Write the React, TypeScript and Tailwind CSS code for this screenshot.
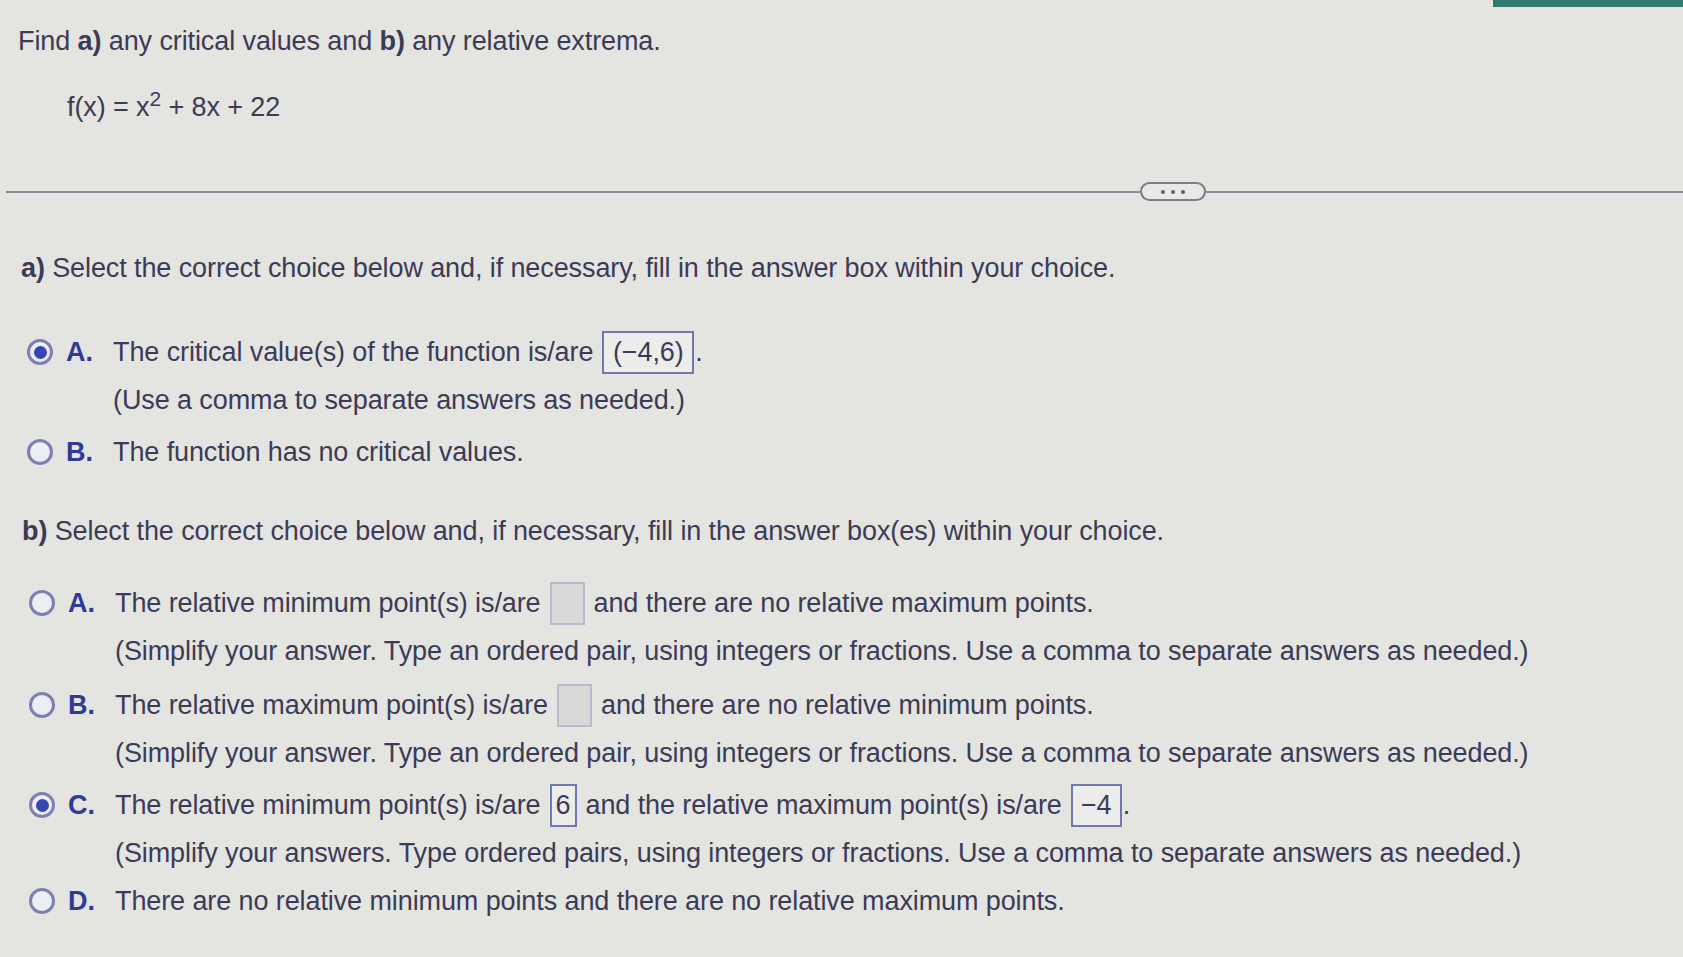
import React from 'react';

const font = { fontFamily: '"Liberation Sans", Arial, sans-serif' };

function Radio({ checked }: { checked?: boolean }) {
  return (
    <span className="flex h-[26px] w-[26px] shrink-0 items-center justify-center rounded-full border-[3px] border-[#7e80b4] bg-[#eceef4]">
      {checked && <span className="h-[13px] w-[13px] rounded-full bg-[#3447b5]" />}
    </span>
  );
}

function AnswerBox({ value, width }: { value?: string; width: string }) {
  if (!value) {
    return (
      <span
        className={`mx-[9px] inline-block h-[43px] ${width} border-2 border-[#b9bacb] bg-[#d9d9d8] align-middle`}
      />
    );
  }
  return (
    <span
      className={`mx-[9px] inline-flex h-[43px] ${width} items-center justify-center border-2 border-[#6f76b0] bg-[#ececea] align-middle`}
    >
      {value}
    </span>
  );
}

function Option({
  letter,
  checked,
  children,
  note,
  className = '',
}: {
  letter: string;
  checked?: boolean;
  children: React.ReactNode;
  note?: string;
  className?: string;
}) {
  return (
    <div className={`flex items-start ${className}`}>
      <div className="flex h-[46px] w-[48px] items-center justify-center">
        <Radio checked={checked} />
      </div>
      <div className="flex h-[46px] w-[49px] items-center pl-[2px] font-bold text-[#2f3b96]">{letter}</div>
      <div className="flex flex-col">
        <div className="flex h-[46px] items-center whitespace-nowrap">{children}</div>
        {note && <div className="mt-[2px] flex h-[46px] items-center whitespace-nowrap">{note}</div>}
      </div>
    </div>
  );
}

export default function App() {
  return (
    <div
      className="flex h-[957px] w-[1683px] flex-col overflow-hidden bg-[#e4e4e1] text-[27px] tracking-[-0.1px] text-[#3c3b56]"
      style={font}
    >
      <div className="flex h-[8px] justify-end">
        <div className="h-[7px] w-[190px] bg-[#2e7b6e]" />
      </div>

      <div className="mt-[17px] pl-[18px] leading-[32px]">
        Find <b>a)</b> any critical values and <b>b)</b> any relative extrema.
      </div>

      <div className="mt-[34px] pl-[67px] leading-[32px]">
        f(x) = x<sup className="text-[21px]">2</sup> + 8x + 22
      </div>

      <div className="mt-[59px] flex items-center">
        <div className="ml-[6px] h-[2px] flex-1 bg-[#8c8c98]" />
        <div className="flex h-[19px] w-[66px] items-center justify-center gap-[6px] rounded-full border-2 border-[#7b7b8a] bg-[#e8e8e6]">
          <span className="h-[4px] w-[4px] rounded-full bg-[#5c5c70]" />
          <span className="h-[4px] w-[4px] rounded-full bg-[#5c5c70]" />
          <span className="h-[4px] w-[4px] rounded-full bg-[#5c5c70]" />
        </div>
        <div className="h-[2px] w-[477px] bg-[#8c8c98]" />
      </div>

      <div className="mt-[51px] pl-[21px] leading-[32px]">
        <b>a)</b> Select the correct choice below and, if necessary, fill in the answer box within your choice.
      </div>

      <div className="mt-[45px] flex flex-col pl-[16px]">
        <Option letter="A." checked note="(Use a comma to separate answers as needed.)">
          The critical value(s) of the function is/are
          <AnswerBox value="(−4,6)" width="w-[92px]" />
          <span className="-ml-[8px]">.</span>
        </Option>
        <Option letter="B." className="mt-[6px]">
          The function has no critical values.
        </Option>
      </div>

      <div className="mt-[40px] pl-[22px] leading-[32px]">
        <b>b)</b> Select the correct choice below and, if necessary, fill in the answer box(es) within your choice.
      </div>

      <div className="mt-[33px] flex flex-col pl-[18px]">
        <Option
          letter="A."
          note="(Simplify your answer. Type an ordered pair, using integers or fractions. Use a comma to separate answers as needed.)"
        >
          The relative minimum point(s) is/are
          <AnswerBox width="w-[35px]" />
          and there are no relative maximum points.
        </Option>
        <Option
          letter="B."
          className="mt-[8px]"
          note="(Simplify your answer. Type an ordered pair, using integers or fractions. Use a comma to separate answers as needed.)"
        >
          The relative maximum point(s) is/are
          <AnswerBox width="w-[35px]" />
          and there are no relative minimum points.
        </Option>
        <Option
          letter="C."
          checked
          className="mt-[6px]"
          note="(Simplify your answers. Type ordered pairs, using integers or fractions. Use a comma to separate answers as needed.)"
        >
          The relative minimum point(s) is/are
          <AnswerBox value="6" width="w-[27px]" />
          and the relative maximum point(s) is/are
          <AnswerBox value="−4" width="w-[51px]" />
          <span className="-ml-[8px]">.</span>
        </Option>
        <Option letter="D." className="mt-[2px]">
          There are no relative minimum points and there are no relative maximum points.
        </Option>
      </div>
    </div>
  );
}
